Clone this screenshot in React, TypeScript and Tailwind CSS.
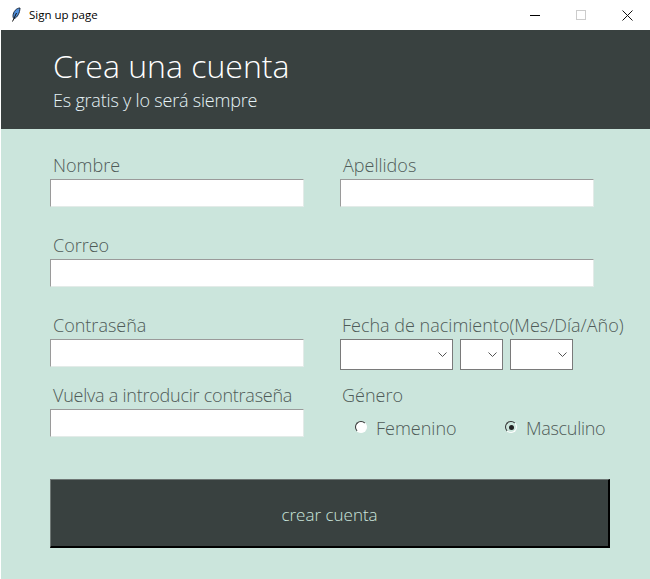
const font = "font-['Open_Sans',sans-serif] font-light";

function Field({ label, wide, tight }: { label: string; wide?: boolean; tight?: boolean }) {
  return (
    <div className="flex flex-col">
      <div className={`h-[23px] pl-[3px] text-[18px] leading-[18px] text-[#4f5b58] whitespace-nowrap ${tight ? "tracking-[-0.24px]" : ""}`}>{label}</div>
      <div className={`${wide ? "w-[544px]" : "w-[254px]"} h-[28px] bg-white border-t border-l border-t-[#9a9a9a] border-l-[#9a9a9a] border-r border-b border-r-[#e3ebe8] border-b-[#e3ebe8]`} />
    </div>
  );
}

function Select({ width }: { width: string }) {
  return (
    <div className={`${width} h-[31px] bg-white border border-[#7a7a7a] flex items-center justify-end pr-[5px]`}>
      <svg width="9" height="6" viewBox="0 0 9 6" fill="none" stroke="#555" strokeWidth="1">
        <path d="M0.5 0.5L4.5 4.5L8.5 0.5" />
      </svg>
    </div>
  );
}

function Radio({ label, checked, width, tight }: { label: string; checked?: boolean; width: string; tight?: boolean }) {
  return (
    <div className={`${width} flex items-center`}>
      <div className={`mb-[2px] w-[12px] h-[12px] rounded-full border border-white border-t-[#333] border-l-[#333] flex items-center justify-center ${checked ? "" : "bg-white"}`}>
        {checked && <div className="w-[5px] h-[5px] rounded-full bg-[#222]" />}
      </div>
      <span className={`ml-[9px] text-[18px] leading-[24px] text-[#4f5b58] ${tight ? "tracking-[-0.3px]" : ""}`}>{label}</span>
    </div>
  );
}

export default function App() {
  return (
    <div className={`w-[650px] h-[579px] bg-white flex flex-col overflow-hidden ${font}`}>
      <div className="h-[30px] flex items-center bg-white shrink-0">
        <svg className="ml-[11px]" width="10" height="16" viewBox="0 0 10 16">
          <path d="M9 1C5.5 1 2.2 4.5 2 8.8C1.9 10.2 2.4 11.2 3.2 11.6C6.4 10.4 8.8 6 9 1Z" fill="#4f8fdc" stroke="#1d2a3c" strokeWidth="1" />
          <path d="M1.5 14.5L5.5 6" stroke="#111" strokeWidth="1" fill="none" />
        </svg>
        <span className="ml-[8px] font-['Open_Sans',sans-serif] font-normal text-[11.5px] leading-[14px] text-black">Sign up page</span>
        <div className="ml-auto flex items-center">
          <div className="w-[10px] h-[1px] bg-black mr-[36px]" />
          <div className="w-[10px] h-[10px] border border-[#cccccc] mr-[36px]" />
          <svg className="mr-[17px]" width="11" height="11" viewBox="0 0 11 11" stroke="#111" strokeWidth="1" fill="none">
            <path d="M0.5 0.5L10.5 10.5M10.5 0.5L0.5 10.5" />
          </svg>
        </div>
      </div>
      <div className="flex-1 flex flex-col ml-[1px]">
        <div className="h-[99px] bg-[#394140] pl-[52px] pt-[16px]">
          <div className="text-[32px] leading-[40px] text-white">Crea una cuenta</div>
          <div className="text-[18px] leading-[24px] mt-[2px] text-[#e6f3f7] tracking-[-0.2px]">Es gratis y lo será siempre</div>
        </div>
        <div className="flex-1 bg-[#cbe5dc] pl-[49px] pt-[27px] flex flex-col">
          <div className="flex gap-[36px]">
            <Field label="Nombre" />
            <Field label="Apellidos" />
          </div>
          <div className="mt-[29px]">
            <Field label="Correo" wide />
          </div>
          <div className="mt-[29px] flex gap-[36px]">
            <div className="flex flex-col gap-[19px]">
              <Field label="Contraseña" />
              <Field label="Vuelva a introducir contraseña" tight />
            </div>
            <div className="flex flex-col">
              <div className="h-[23px] pl-[2px] text-[18px] leading-[18px] text-[#4f5b58] whitespace-nowrap">Fecha de nacimiento(Mes/Día/Año)</div>
              <div className="flex gap-[7px]">
                <Select width="w-[113px]" />
                <Select width="w-[43px]" />
                <Select width="w-[63px]" />
              </div>
              <div className="h-[23px] mt-[16px] pl-[2px] text-[18px] leading-[18px] text-[#4f5b58]">Género</div>
              <div className="flex pl-[15px] pt-[7px]">
                <Radio label="Femenino" width="w-[150px]" />
                <Radio label="Masculino" checked width="w-[110px]" tight />
              </div>
            </div>
          </div>
          <div className="mt-[39px] w-[560px] h-[69px] pt-[3px] bg-[#394140] border-t border-l border-t-[#6f7775] border-l-[#6f7775] border-r-2 border-b-2 border-r-black border-b-black flex items-center justify-center text-[17px] text-[#cbe5dc]">
            crear cuenta
          </div>
        </div>
      </div>
    </div>
  );
}
